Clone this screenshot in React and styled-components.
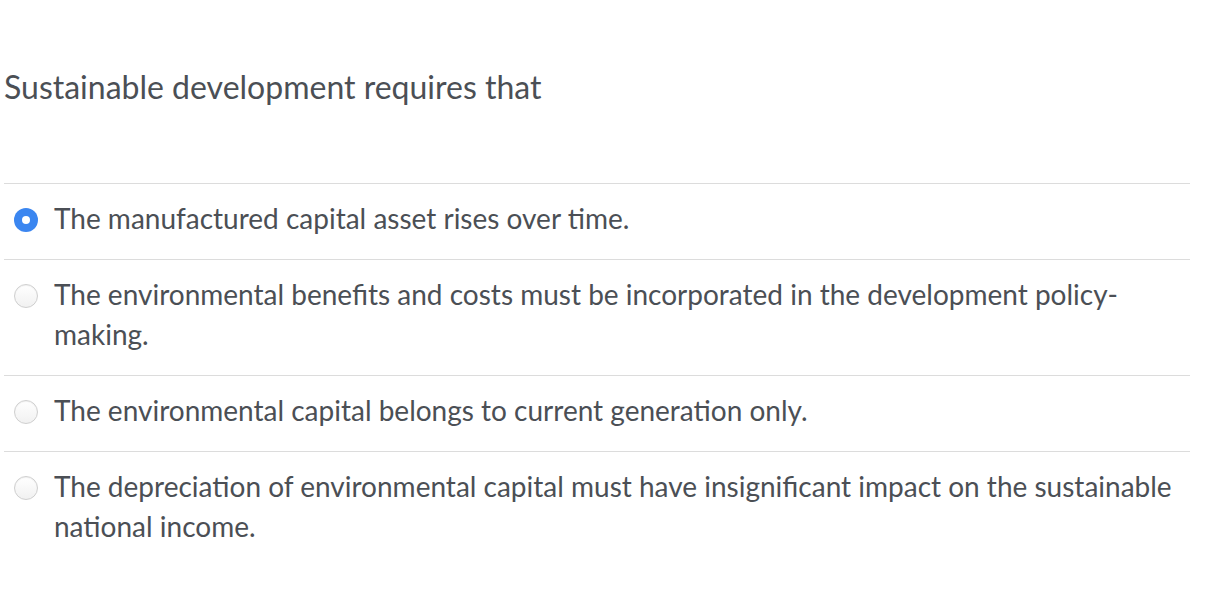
import React from 'react'
import styled, { createGlobalStyle } from 'styled-components'

const GlobalStyle = createGlobalStyle`
  body {
    margin: 0;
    background: #fff;
    font-family: Lato, "Open Sans", sans-serif;
    color: #4b4f55;
  }
`

const Quiz = styled.div`
  width: 1186px;
  margin-left: 4px;
  padding-top: 67px;
`

const Question = styled.div`
  font-size: 32px;
  line-height: 40px;
  margin-bottom: 76px;
`

const Answers = styled.div`
  border-top: 1px solid #dcdcdc;
`

const Answer = styled.label`
  display: flex;
  align-items: flex-start;
  padding: 14px 0 21px;
  border-bottom: 1px solid #dcdcdc;
  &:last-child {
    border-bottom: none;
  }
`

const Radio = styled.span`
  flex: none;
  box-sizing: border-box;
  width: 24px;
  height: 24px;
  margin: 10px 16px 0 10px;
  border-radius: 50%;
  ${props =>
    props.checked
      ? `
    background: #3b86f0;
    display: flex;
    align-items: center;
    justify-content: center;
    &::after {
      content: '';
      width: 8px;
      height: 8px;
      border-radius: 50%;
      background: #fff;
    }
  `
      : `
    border: 1px solid #cfcfcf;
    background: linear-gradient(#fff, #f1f1f1);
    box-shadow: inset 0 1px 1px rgba(0, 0, 0, 0.06);
  `}
`

const AnswerText = styled.div`
  flex: 1;
  font-size: 28px;
  line-height: 40px;
`

const answers = [
  { text: 'The manufactured capital asset rises over time.', checked: true },
  {
    text: 'The environmental benefits and costs must be incorporated in the development policy-making.',
  },
  { text: 'The environmental capital belongs to current generation only.' },
  {
    text: 'The depreciation of environmental capital must have insignificant impact on the sustainable national income.',
  },
]

const App = () => {
  return (
    <>
      <GlobalStyle />
      <Quiz>
        <Question>Sustainable development requires that</Question>
        <Answers>
          {answers.map((a, i) => (
            <Answer key={i}>
              <Radio checked={a.checked} />
              <AnswerText>{a.text}</AnswerText>
            </Answer>
          ))}
        </Answers>
      </Quiz>
    </>
  )
}

export default App
